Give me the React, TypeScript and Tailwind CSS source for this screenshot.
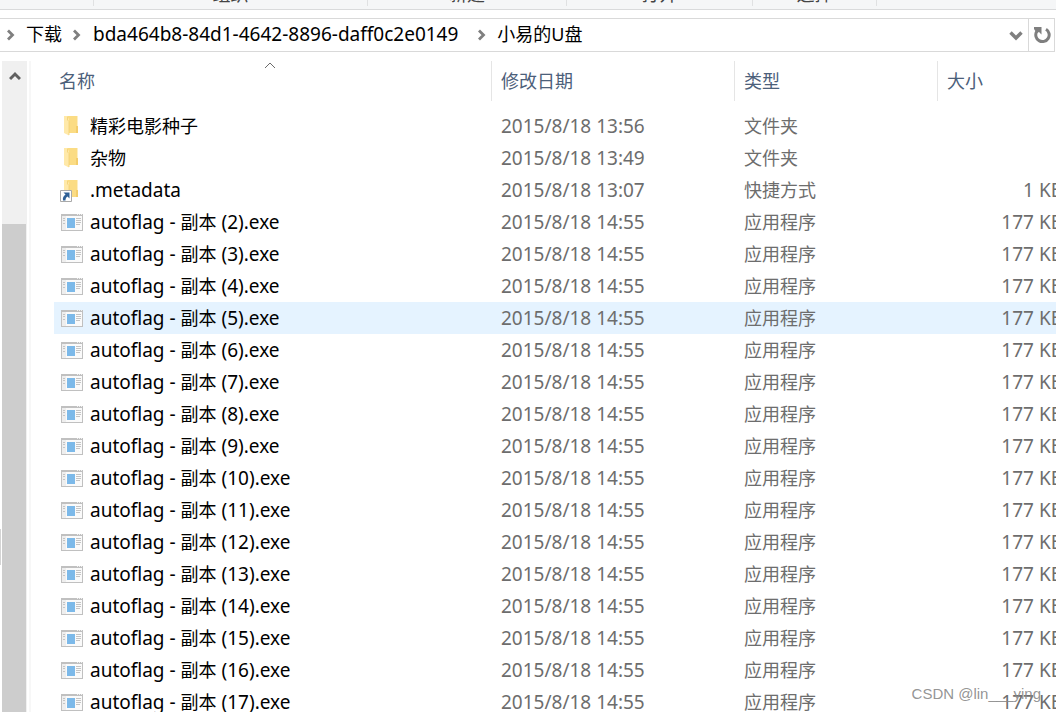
import type { ReactNode } from 'react';

type Kind = 'folder' | 'shortcut' | 'app';
type Entry = { name: ReactNode; date: string; type: string; size: string; kind: Kind; active?: boolean };

const Cjk = ({ children }: { children: ReactNode }) => <span className="text-[18px]">{children}</span>;

const copies: Entry[] = Array.from({ length: 16 }, (_, i) => ({
  name: (
    <>
      autoflag - <Cjk>副本</Cjk> ({i + 2}).exe
    </>
  ),
  date: '2015/8/18 14:55',
  type: '应用程序',
  size: '177 KB',
  kind: 'app',
  active: i === 3,
}));

const entries: Entry[] = [
  { name: <Cjk>精彩电影种子</Cjk>, date: '2015/8/18 13:56', type: '文件夹', size: '', kind: 'folder' },
  { name: <Cjk>杂物</Cjk>, date: '2015/8/18 13:49', type: '文件夹', size: '', kind: 'folder' },
  { name: '.metadata', date: '2015/8/18 13:07', type: '快捷方式', size: '1 KB', kind: 'shortcut' },
  ...copies,
];

function FolderShape() {
  return (
    <>
      <path d="M7 2h10.500v17H7z" fill="#fbdc84" />
      <path d="M16 12h2v7h-2z" fill="#f3cd6c" />
      <path d="M4 2h3l2 3v16.500L4 19z" fill="#ffe9a9" />
      <path d="M7.500 3v3l1.500 1.500V21" fill="none" stroke="#f2cf74" strokeWidth=".8" />
    </>
  );
}

function FileIcon({ kind }: { kind: Kind }) {
  if (kind === 'app') {
    return (
      <svg className="h-6 w-6 shrink-0" viewBox="0 0 24 24" shapeRendering="crispEdges" aria-hidden="true">
        <path d="M1 4h22v17H1z" fill="#c0c0c0" />
        <path d="M2 6h20v14H2z" fill="#fafafa" />
        <path d="M2 6h4v14H2z" fill="#eeeeee" />
        <path d="M17 4h1v1h-1zM19 4h1v1h-1zM21 4h1v1h-1z" fill="#f0f0f0" />
        <path d="M7 8h8v10H7z" fill="#7cb9e9" />
        <path d="M3 8h2v1H3zM3 10h2v1H3zM3 13h2v1H3zM16 8h5v1h-5zM16 10h5v1h-5zM16 12h5v1h-5zM16 14h4v1h-4z" fill="#c4c4c4" />
      </svg>
    );
  }
  return (
    <svg className="h-6 w-6 shrink-0" viewBox="0 0 24 24" aria-hidden="true">
      <FolderShape />
      {kind === 'shortcut' && (
        <>
          <path d="M.5 12.500h11v11H.5z" fill="#fff" stroke="#a9a9a9" />
          <path d="M3.500 14.500H9.500v6l-2-2c-1.500 1-2 2-2 4H3c-.5-3 .5-4.500 2.500-6z" fill="#2f6096" />
        </>
      )}
    </svg>
  );
}

function Crumb() {
  return (
    <svg className="mt-[2px] h-3 w-2 shrink-0" viewBox="0 0 8 12" fill="none" stroke="#7f7f7f" strokeWidth="2.8" aria-hidden="true">
      <path d="M1 1.500L5.500 6 1 10.500" />
    </svg>
  );
}

const groups = [
  { label: '剪贴板', width: 'w-[94px]' },
  { label: '组织', width: 'w-[274px]' },
  { label: '新建', width: 'w-[199px]' },
  { label: '打开', width: 'w-[186px]' },
  { label: '选择', width: 'w-[124px]' },
];

const columns = ['名称', '修改日期', '类型', '大小'];

export default function App() {
  return (
    <div className="relative flex h-screen flex-col overflow-hidden bg-white font-['Noto_Sans','Noto_Sans_CJK_SC',sans-serif] text-[18px] text-black">
      <header className="flex h-[10px] shrink-0 items-end overflow-hidden border-b border-[#d9dadb] bg-[#f5f6f7]">
        {groups.map((g, i) => (
          <div key={g.label} className={`${g.width} flex h-8 shrink-0 flex-col pb-[3px]`}>
            <div className="h-full border-r border-[#e0e1e2] text-center text-[18px] leading-[34px] text-[#444]">
              {i > 0 && g.label}
            </div>
          </div>
        ))}
      </header>

      <nav className="mt-2 mr-px flex h-[34px] shrink-0 items-stretch border border-l-0 border-[#d9d9d9]">
        <div className="flex flex-1 items-center pb-[2px] pl-[7px] leading-6">
          <Crumb />
          <a href="#downloads" className="mx-[11px]">下载</a>
          <Crumb />
          <a href="#folder" className="mr-5 ml-3 text-[19px]">bda464b8-84d1-4642-8896-daff0c2e0149</a>
          <Crumb />
          <a href="#current" className="mx-[11px]">小易的U盘</a>
        </div>
        <button aria-label="历史记录" className="flex w-6 items-center justify-center">
          <svg className="h-3 w-4" viewBox="0 0 16 12" fill="none" stroke="#7f7f7f" strokeWidth="3.4" aria-hidden="true">
            <path d="M2.500 3.500L8 9l5.500-5.500" />
          </svg>
        </button>
        <button aria-label="刷新" className="flex w-[26px] items-center justify-center border-l border-[#d9d9d9]">
          <svg className="h-[18px] w-[18px]" viewBox="0 0 18 18" aria-hidden="true">
            <path d="M13 3.200A6.700 6.700 0 1 1 3.700 5.500" fill="none" stroke="#7f7f7f" strokeWidth="3" />
            <path d="M1 1h7.500v7.500L6 6 4 7 2 4.500 1 3z" fill="#7f7f7f" />
          </svg>
        </button>
      </nav>

      <main className="mt-[9px] flex min-h-0 flex-1">
        <div className="w-[2px] shrink-0 pt-[468px]">
          <div className="h-9 w-px bg-[#d4d4d4]" />
        </div>
        <div className="w-[25px] shrink-0 bg-[#f0f0f0]">
          <button aria-label="向上滚动" className="flex h-[30px] w-full items-center justify-center">
            <svg className="h-3 w-3" viewBox="0 0 12 12" fill="none" stroke="#606060" strokeWidth="3" aria-hidden="true">
              <path d="M1 9l5-5 5 5" />
            </svg>
          </button>
          <div className="mt-[133px] mr-px h-full bg-[#cdcdcd]" />
        </div>
        <div className="ml-[2px] w-[2px] shrink-0 bg-[#f7f7f7]" />

        <section className="min-w-0 flex-1 overflow-hidden pl-[23px]">
          <table className="w-[1020px] table-fixed border-collapse text-left">
            <colgroup>
              <col className="w-[437px]" />
              <col className="w-[243px]" />
              <col className="w-[203px]" />
              <col className="w-[137px]" />
            </colgroup>
            <thead>
              <tr>
                {columns.map((c, i) => (
                  <th key={c} className="p-0 pb-[9px] font-normal text-[#4c607a]">
                    <div className={i === 0 ? 'relative flex h-10 items-center pl-[5px]' : 'flex h-10 items-center border-l border-[#e5e5e5] pl-[9px]'}>
                      {c}
                      {i === 0 && (
                        <svg className="absolute top-0 left-[210px] h-2 w-3" viewBox="0 0 12 8" fill="none" stroke="#6b6b6b" aria-hidden="true">
                          <path d="M1 7l5-5 5 5" />
                        </svg>
                      )}
                    </div>
                  </th>
                ))}
              </tr>
            </thead>
            <tbody>
              {entries.map((e, i) => (
                <tr key={i} className={e.active ? 'h-8 bg-[#e5f3ff]' : 'h-8'}>
                  <td className="p-0">
                    <div className="flex h-8 items-center gap-[6px] pl-[6px] whitespace-nowrap">
                      <FileIcon kind={e.kind} />
                      <span className="text-[19px] leading-6">{e.name}</span>
                    </div>
                  </td>
                  <td className="p-0 pl-[10px] text-[19px] leading-6 text-[#6d6d6d]">{e.date}</td>
                  <td className="p-0 pl-[10px] leading-6 text-[#6d6d6d]">{e.type}</td>
                  <td className="p-0 pr-[11px] text-right text-[19px] leading-6 text-[#6d6d6d]">{e.size}</td>
                </tr>
              ))}
            </tbody>
          </table>
        </section>
      </main>

      <div className="pointer-events-none absolute right-[15px] bottom-2 font-['Liberation_Sans',sans-serif] text-[15px] leading-5 text-[#888]/90">
        CSDN @lin___ying
      </div>
    </div>
  );
}
